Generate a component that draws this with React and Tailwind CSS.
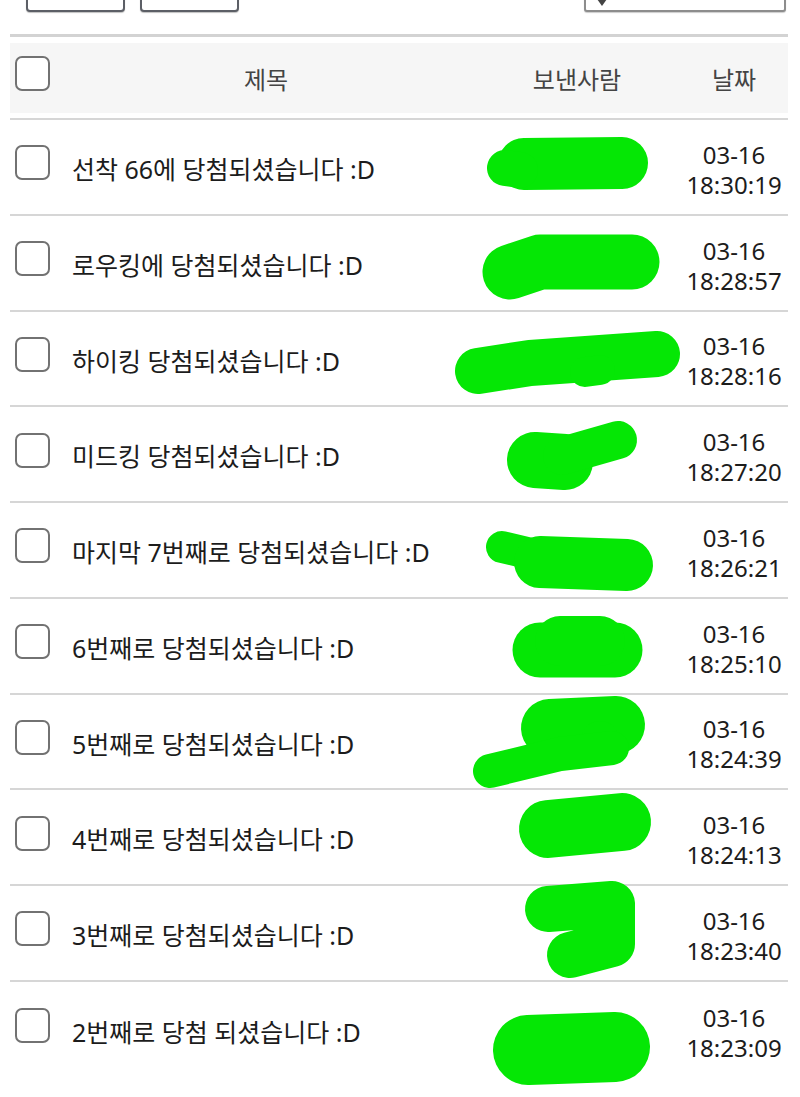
const rows = [
  { title: "선착 66에 당첨되셨습니다 :D", time: "18:30:19" },
  { title: "로우킹에 당첨되셨습니다 :D", time: "18:28:57" },
  { title: "하이킹 당첨되셨습니다 :D", time: "18:28:16" },
  { title: "미드킹 당첨되셨습니다 :D", time: "18:27:20" },
  { title: "마지막 7번째로 당첨되셨습니다 :D", time: "18:26:21" },
  { title: "6번째로 당첨되셨습니다 :D", time: "18:25:10" },
  { title: "5번째로 당첨되셨습니다 :D", time: "18:24:39" },
  { title: "4번째로 당첨되셨습니다 :D", time: "18:24:13" },
  { title: "3번째로 당첨되셨습니다 :D", time: "18:23:40" },
  { title: "2번째로 당첨 되셨습니다 :D", time: "18:23:09" },
];

// scribbles hiding the sender names, in page coordinates
const scribbles = [
  { w: 52, d: "M524 164 L622 163" },
  { w: 36, d: "M505 168 L520 170" },
  { w: 55, d: "M510 272 L540 262 L632 262" },
  { w: 46, d: "M478 371 L530 363 L657 354" },
  { w: 30, d: "M585 372 L600 370" },
  { w: 56, d: "M535 460 L565 462" },
  { w: 38, d: "M562 456 L618 440" },
  { w: 32, d: "M502 547 L540 556" },
  { w: 52, d: "M540 562 L627 565" },
  { w: 55, d: "M540 650 L615 650" },
  { w: 50, d: "M560 641 L600 641" },
  { w: 58, d: "M550 728 L616 725" },
  { w: 38, d: "M600 740 L602 745" },
  { w: 34, d: "M490 771 L560 754 L612 748" },
  { w: 58, d: "M548 829 L622 822" },
  { w: 46, d: "M548 909 L612 904 L612 944 L570 955" },
  { w: 70, d: "M528 1050 L615 1047" },
];

function Checkbox({ className = "" }) {
  return <div className={`w-[35px] h-[35px] rounded-[7px] border-2 border-[#727272] bg-white ${className}`} />;
}

export default function App() {
  return (
    <div className="relative w-[800px] h-[1097px] overflow-hidden bg-white text-[#1c1c1c] font-['Noto_Sans','Noto_Sans_CJK_KR',sans-serif]">
      {/* toolbar, mostly scrolled off the top */}
      <div className="flex h-[34px] pl-[26px] pr-[14px]">
        <div className="-mt-[13px] w-[99px] h-[25px] rounded-[4px] border-2 border-[#5c5f66] bg-white shadow-[0_1px_1px_rgba(0,0,0,0.25)]" />
        <div className="-mt-[13px] ml-[15px] w-[99px] h-[25px] rounded-[4px] border-2 border-[#5c5f66] bg-white shadow-[0_1px_1px_rgba(0,0,0,0.25)]" />
        <div className="-mt-[13px] ml-auto w-[202px] h-[25px] rounded-[3px] border-2 border-[#8d8d8d] bg-white flex items-end pl-[10px] pb-[3px] shadow-[0_1px_1px_rgba(0,0,0,0.2)]">
          <svg width="12" height="8" viewBox="0 0 12 8"><path d="M1 0 L11 0 L6 7 Z" fill="#444" /></svg>
        </div>
      </div>

      <div className="mx-[10px] w-[778px] border-t-[3px] border-[#d3d3d3] pt-[6px]">
        <div className="h-[70px] bg-[#f6f6f6] flex items-center text-[24px] text-[#444]">
          <div className="w-[50px] pl-[5px]"><Checkbox className="mb-[10px]" /></div>
          <div className="w-[412px] text-center pt-[3px]">제목</div>
          <div className="w-[210px] text-center pt-[3px]">보낸사람</div>
          <div className="w-[104px] text-center pt-[3px]">날짜</div>
        </div>
        <div className="h-[5px]" />
        <div className="border-b-2 border-[#d6d6d6]" />

        {rows.map((r, i) => (
          <div
            key={i}
            className={`h-[95.75px] pt-[6px] flex items-center text-[24px] ${i < rows.length - 1 ? "border-b-2 border-[#d6d6d6]" : ""}`}
          >
            <div className="w-[50px] pl-[5px]"><Checkbox className="mb-[14px]" /></div>
            <div className="w-[412px] pl-[12px] whitespace-nowrap text-[25px]">{r.title}</div>
            <div className="w-[210px]" />
            <div className="w-[104px] text-center leading-[30px]">
              <div>03-16</div>
              <div>{r.time}</div>
            </div>
          </div>
        ))}
      </div>

      <svg className="absolute inset-0 pointer-events-none" width="800" height="1097" viewBox="0 0 800 1097">
        {scribbles.map((s, i) => (
          <path key={i} d={s.d} stroke="#05e705" strokeWidth={s.w} strokeLinecap="round" strokeLinejoin="round" fill="none" />
        ))}
      </svg>
    </div>
  );
}
